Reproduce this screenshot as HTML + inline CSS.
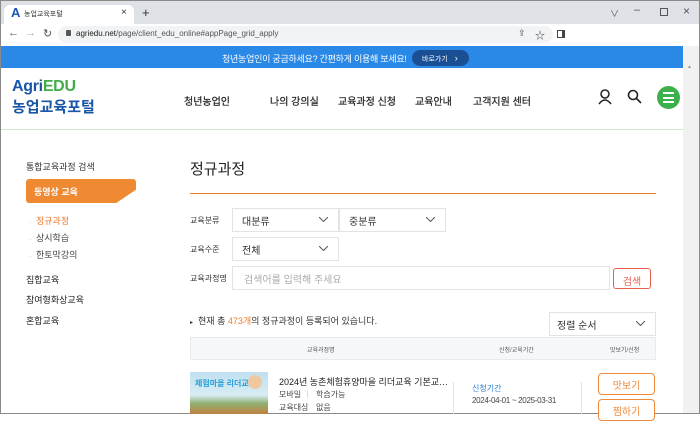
<!DOCTYPE html>
<html><head><meta charset="utf-8"><style>
*{box-sizing:border-box;margin:0;padding:0}
body{width:700px;height:414px;overflow:hidden;position:relative;font-family:"Liberation Sans","Noto Sans CJK KR",sans-serif;background:#fff;color:#222}
.a{position:absolute;white-space:nowrap}
.sel{position:absolute;border:1px solid #e3e3e3;background:#fff;font-size:10px;color:#333;padding-left:9px;display:flex;align-items:center}
.sel svg{position:absolute;right:10px;top:50%;margin-top:-3px}
.lbl{position:absolute;font-size:8px;color:#333}
.ob{position:absolute;border:1px solid #f08a3a;border-radius:4px;color:#f08a3a;font-size:10px;display:flex;align-items:center;justify-content:center;background:#fff}
</style></head><body>
<div class="a" style="left:0;top:0;width:700px;height:46px;background:#dee1e6;border:1px solid #8a8a8a;border-bottom:none"></div>
<div class="a" style="left:4px;top:5px;width:130px;height:19px;background:#fff;border-radius:6px 6px 0 0"></div>
<div class="a" style="left:11px;top:5px;font-size:13px;font-weight:bold;color:#1a56b0">A</div>
<div class="a" style="left:24px;top:9px;font-size:7px;color:#333">농업교육포털</div>
<div class="a" style="left:121px;top:7px;font-size:10px;color:#333">×</div>
<div class="a" style="left:142px;top:5px;font-size:13px;color:#333">+</div>
<div class="a" style="left:610px;top:7px;font-size:9px;color:#555">∨</div>
<div class="a" style="left:634px;top:4px;font-size:11px;color:#555">–</div>
<div class="a" style="left:660px;top:8px;width:8px;height:8px;border:1px solid #555"></div>
<div class="a" style="left:683px;top:4px;font-size:12px;color:#555">×</div>
<div class="a" style="left:1px;top:24px;width:698px;height:22px;background:#fff"></div>
<div class="a" style="left:8px;top:27px;font-size:11px;color:#555">←</div>
<div class="a" style="left:25px;top:27px;font-size:11px;color:#aaa">→</div>
<div class="a" style="left:43px;top:27px;font-size:11px;color:#555">↻</div>
<div class="a" style="left:58px;top:26px;width:495px;height:17px;background:#f1f3f4;border-radius:9px"></div>
<div class="a" style="left:66px;top:30px;width:5px;height:6px;background:#555;border-radius:1px"></div>
<div class="a" style="left:76px;top:29px;font-size:8px;color:#555"><span style="color:#222">agriedu.net</span>/page/client_edu_online#appPage_grid_apply</div>
<div class="a" style="left:518px;top:28px;font-size:9px;color:#555">⇪</div>
<div class="a" style="left:535px;top:27px;font-size:10px;color:#444">☆</div>
<div class="a" style="left:557px;top:30px;width:8px;height:8px;border:1px solid #444;border-right-width:3px"></div>
<div class="a" style="left:0;top:46px;width:700px;height:368px;border-left:1px solid #8a8a8a;border-right:1px solid #8a8a8a;border-bottom:1px solid #8a8a8a"></div>
<div class="a" style="left:1px;top:46px;width:682px;height:22px;background:#2a88e6"></div>
<div class="a" style="left:222px;top:52px;font-size:9px;color:#fff;letter-spacing:-0.25px">청년농업인이 궁금하세요? 간편하게 이용해 보세요!</div>
<div class="a" style="left:412px;top:50px;width:57px;height:16px;border-radius:8px;background:#1b4f94;color:#fff;font-size:7px;padding:3px 0 0 10px">바로가기 <span style="font-size:9px;margin-left:5px">›</span></div>
<div class="a" style="left:683px;top:46px;width:16px;height:367px;background:#f1f1f1"></div>
<div class="a" style="left:687px;top:64px;font-size:5px;color:#999">▲</div>
<div class="a" style="left:12px;top:78px;font-size:16px;font-weight:bold;color:#1a56a8;letter-spacing:-0.3px">Agri<span style="color:#3fae49">EDU</span></div>
<div class="a" style="left:12px;top:96px;font-size:15px;font-weight:bold;color:#1a56a8">농업교육포털</div>
<div class="a" style="left:184px;top:93px;font-size:10px;color:#222;-webkit-text-stroke:0.2px #222">청년농업인</div>
<div class="a" style="left:270px;top:93px;font-size:10px;color:#222;-webkit-text-stroke:0.2px #222">나의 강의실</div>
<div class="a" style="left:338px;top:93px;font-size:10px;color:#222;-webkit-text-stroke:0.2px #222">교육과정 신청</div>
<div class="a" style="left:415px;top:93px;font-size:10px;color:#222;-webkit-text-stroke:0.2px #222">교육안내</div>
<div class="a" style="left:473px;top:93px;font-size:10px;color:#222;-webkit-text-stroke:0.2px #222">고객지원 센터</div>
<svg class="a" style="left:598px;top:89px" width="14" height="16"><circle cx="7" cy="5" r="4" fill="none" stroke="#222" stroke-width="1.5"/><path d="M1 15 Q7 7 13 15" fill="none" stroke="#222" stroke-width="1.5"/></svg>
<svg class="a" style="left:627px;top:89px" width="15" height="15"><circle cx="6" cy="6" r="4.5" fill="none" stroke="#222" stroke-width="1.6"/><path d="M9.5 9.5 L14 14" stroke="#222" stroke-width="1.6"/></svg>
<div class="a" style="left:657px;top:86px;width:23px;height:23px;border-radius:50%;background:#3cb04a"></div>
<div class="a" style="left:663px;top:92px;width:11px;height:11px;border-top:2px solid #fff;border-bottom:2px solid #fff"></div>
<div class="a" style="left:663px;top:96.5px;width:11px;height:2px;background:#fff"></div>
<div class="a" style="left:1px;top:129px;width:682px;height:1px;background:#cfe6cf"></div>
<div class="a" style="left:26px;top:160px;font-size:9px;color:#333">통합교육과정 검색</div>
<div class="a" style="left:26px;top:179px;width:110px;height:24px;background:#ef8a33;clip-path:polygon(0 0,100% 0,100% 45%,82% 100%,0 100%);border-radius:3px"></div>
<div class="a" style="left:34px;top:185px;font-size:9px;color:#fff;font-weight:bold">동영상 교육</div>
<div class="a" style="left:29px;top:214px;font-size:9px;color:#ef7a2c"><span style="color:#999;font-size:6px">·</span>&nbsp; 정규과정</div>
<div class="a" style="left:29px;top:231px;font-size:9px;color:#444"><span style="color:#999;font-size:6px">·</span>&nbsp; 상시학습</div>
<div class="a" style="left:29px;top:248px;font-size:9px;color:#444"><span style="color:#999;font-size:6px">·</span>&nbsp; 한토막강의</div>
<div class="a" style="left:26px;top:273px;font-size:9px;color:#222">집합교육</div>
<div class="a" style="left:26px;top:293px;font-size:9px;color:#222">참여형화상교육</div>
<div class="a" style="left:26px;top:314px;font-size:9px;color:#222">혼합교육</div>
<div class="a" style="left:190px;top:158px;font-size:15px;color:#222">정규과정</div>
<div class="a" style="left:190px;top:193px;width:466px;height:1px;background:#f07a20"></div>
<div class="lbl" style="left:190px;top:215px">교육분류</div>
<div class="sel" style="left:232px;top:208px;width:107px;height:24px">대분류<svg width="9" height="5"><path d="M0 0L4.5 4.5L9 0" fill="none" stroke="#555"/></svg></div>
<div class="sel" style="left:339px;top:208px;width:107px;height:24px">중분류<svg width="9" height="5"><path d="M0 0L4.5 4.5L9 0" fill="none" stroke="#555"/></svg></div>
<div class="lbl" style="left:190px;top:244px">교육수준</div>
<div class="sel" style="left:232px;top:237px;width:107px;height:24px">전체<svg width="9" height="5"><path d="M0 0L4.5 4.5L9 0" fill="none" stroke="#555"/></svg></div>
<div class="lbl" style="left:190px;top:273px">교육과정명</div>
<div class="sel" style="left:232px;top:266px;width:378px;height:24px;color:#aaa;padding-left:11px">검색어를 입력해 주세요</div>
<div class="a" style="left:613px;top:268px;width:38px;height:21px;border:1px solid #e8604c;border-radius:3px;color:#e8604c;font-size:10px;text-align:center;padding-top:4px">검색</div>
<div class="a" style="left:190px;top:314px;font-size:9px;color:#333"><span style="font-size:6px">▸</span>&nbsp; 현재 총 <span style="color:#ef7a2c">473개</span>의 정규과정이 등록되어 있습니다.</div>
<div class="sel" style="left:549px;top:312px;width:107px;height:24px;padding-left:7px">정렬 순서<svg width="9" height="5"><path d="M0 0L4.5 4.5L9 0" fill="none" stroke="#555"/></svg></div>
<div class="a" style="left:190px;top:337px;width:466px;height:23px;background:#f5f7f9;border:1px solid #e8ebee"></div>
<div class="a" style="left:307px;top:345px;font-size:6px;color:#555">교육과정명</div>
<div class="a" style="left:499px;top:345px;font-size:6px;color:#555">신청/교육기간</div>
<div class="a" style="left:610px;top:345px;font-size:6px;color:#555">맛보기/신청</div>
<div class="a" style="left:190px;top:372px;width:78px;height:42px;background:linear-gradient(#bfe0f0,#d8ecf4 55%,#8fb070 75%,#c08040)"></div>
<div class="a" style="left:195px;top:378px;font-size:8px;font-weight:bold;color:#2aa0d8">체험마을 리더교육</div>
<div class="a" style="left:248px;top:375px;width:14px;height:14px;border-radius:50%;background:#f0c8a0"></div>
<div class="a" style="left:279px;top:375px;font-size:9px;color:#222">2024년 농촌체험휴양마을 리더교육 기본교…</div>
<div class="a" style="left:279px;top:389px;font-size:8px;color:#444">모바일</div>
<div class="a" style="left:316px;top:389px;font-size:8px;color:#444">학습가능</div>
<div class="a" style="left:279px;top:402px;font-size:8px;color:#444">교육대상</div>
<div class="a" style="left:316px;top:402px;font-size:8px;color:#444">없음</div>
<div class="a" style="left:307px;top:390px;width:1px;height:8px;background:#ddd"></div>
<div class="a" style="left:307px;top:403px;width:1px;height:8px;background:#ddd"></div>
<div class="a" style="left:453px;top:382px;width:1px;height:32px;background:#e5e5e5"></div>
<div class="a" style="left:581px;top:382px;width:1px;height:32px;background:#e5e5e5"></div>
<div class="a" style="left:472px;top:383px;font-size:8px;color:#2a7fd4">신청기간</div>
<div class="a" style="left:472px;top:396px;font-size:8px;color:#444;letter-spacing:-0.3px">2024-04-01 ~ 2025-03-31</div>
<div class="ob" style="left:598px;top:373px;width:57px;height:22px">맛보기</div>
<div class="ob" style="left:598px;top:399px;width:57px;height:22px">찜하기</div>
</body></html>
